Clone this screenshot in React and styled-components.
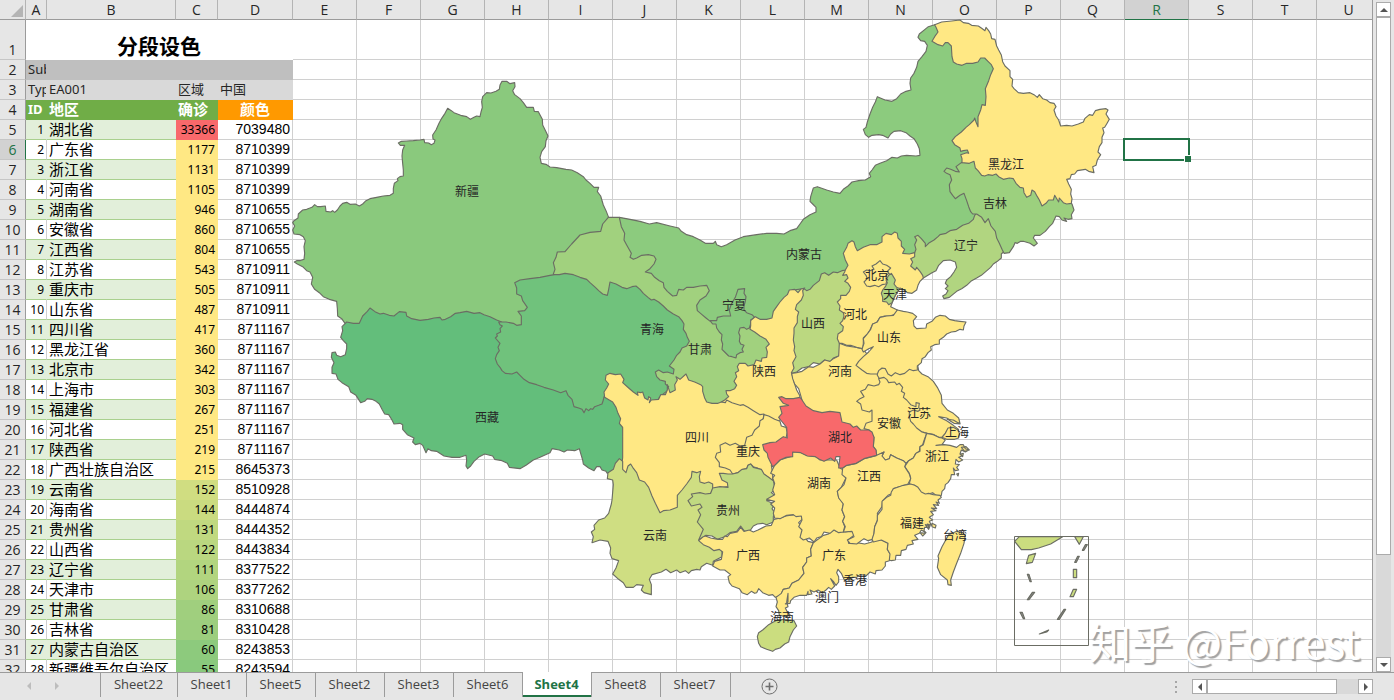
import React from "react";
import styled, { createGlobalStyle, css } from "styled-components";

const uiFont = `"Open Sans", "Noto Sans", "Noto Sans CJK SC", sans-serif`;
const cellFont = `"Noto Sans", "Noto Sans CJK SC", sans-serif`;

const GlobalStyle = createGlobalStyle`
  * {
    box-sizing: border-box;
  }
  body {
    margin: 0;
    background: #e6e6e6;
    font-family: ${uiFont};
  }
`;

const Workbook = styled.div`
  display: flex;
  flex-direction: column;
  height: 100vh;
  overflow: hidden;
`;

const Workspace = styled.main`
  display: flex;
  flex: 1;
  min-height: 0;
`;

const SheetView = styled.section`
  position: relative;
  flex: 1;
  min-width: 0;
  overflow: hidden;
  background: #fff;
  border-right: 1px solid #9b9b9b;
`;

const Grid = styled.table`
  table-layout: fixed;
  width: 1px;
  border-collapse: separate;
  border-spacing: 0;
`;

const Col = styled.col`
  width: ${(p) => p.$w}px;
`;

const headBase = css`
  padding: 0;
  background: ${(p) => (p.$active ? "#d2d2d2" : "#e6e6e6")};
  color: ${(p) => (p.$active ? "#217346" : "#262626")};
  font-size: 14px;
  font-weight: 400;
  line-height: 19px;
  text-align: center;
`;

const ColHead = styled.th`
  ${headBase}
  height: 20px;
  border-right: 1px solid #b4b4b4;
  border-bottom: 1px solid ${(p) => (p.$active ? "#217346" : "#9b9b9b")};
`;

const RowHead = styled.th`
  ${headBase}
  height: ${(p) => (p.$tall ? 40 : 20)}px;
  vertical-align: bottom;
  border-right: 1px solid ${(p) => (p.$active ? "#217346" : "#9b9b9b")};
  border-bottom: 1px solid #c6c6c6;
`;

const Corner = styled.th`
  padding: 0 2px 2px 0;
  height: 20px;
  background: #e6e6e6;
  border-right: 1px solid #b4b4b4;
  border-bottom: 1px solid #9b9b9b;
  text-align: right;
  vertical-align: bottom;

  svg {
    display: block;
    margin-left: auto;
  }
`;

const Cell = styled.td`
  height: 20px;
  padding: 0 2px;
  overflow: hidden;
  white-space: nowrap;
  color: #000;
  font-family: ${cellFont};
  font-size: 13px;
  line-height: 19px;
  border-right: 1px solid #d0d0d0;
  border-bottom: 1px solid #d0d0d0;
`;

const TitleCell = styled(Cell)`
  height: 40px;
  padding-bottom: 2px;
  font-size: 21px;
  font-weight: 700;
  line-height: 22px;
  text-align: center;
  vertical-align: bottom;
  border-color: #fff;
`;

const BandCell = styled(Cell)`
  background: ${(p) => p.$fill};
  border-color: ${(p) => p.$fill};
  color: #262626;
`;

const FieldCell = styled(Cell)`
  background: ${(p) => p.$fill};
  border-color: ${(p) => p.$fill};
  color: #fff;
  font-size: ${(p) => (p.$small ? 13 : 15)}px;
  font-weight: 700;
  text-align: ${(p) => (p.$center ? "center" : "left")};
`;

const IdCell = styled(Cell)`
  padding-top: 1px;
  background: ${(p) => (p.$band ? "#e2efda" : "#fff")};
  border-right-color: ${(p) => (p.$band ? "#e2efda" : "#d0d0d0")};
  border-bottom-color: #a9d08e;
  font-size: 12px;
  line-height: 18px;
  text-align: right;
`;

const NameCell = styled(Cell)`
  background: ${(p) => (p.$band ? "#e2efda" : "#fff")};
  border-right: 0;
  border-bottom-color: #a9d08e;
  font-size: 15px;
`;

const CountCell = styled(Cell)`
  padding-top: 1px;
  background: ${(p) => p.$fill};
  border-color: ${(p) => p.$fill};
  font-size: 12px;
  line-height: 18px;
  text-align: right;
`;

const ColorCell = styled(Cell)`
  font-family: "Liberation Sans", Arial, sans-serif;
  font-size: 14px;
  text-align: right;
`;

const SelectedCell = styled(Cell)`
  position: relative;
  overflow: visible;

  &::before {
    content: "";
    position: absolute;
    inset: -2px;
    border: 2px solid #217346;
  }

  &::after {
    content: "";
    position: absolute;
    right: -3px;
    bottom: -3px;
    width: 6px;
    height: 6px;
    background: #217346;
    border: 1px solid #fff;
    border-width: 1px 0 0 1px;
  }
`;

const MapShape = styled.svg`
  position: absolute;
  left: 290px;
  top: 18px;
  width: 830px;
  height: 650px;
  pointer-events: none;

  path {
    stroke: #6b6d64;
    stroke-width: 3.4;
    stroke-linejoin: round;
  }
  text {
    fill: #262626;
    font-family: "Noto Sans CJK SC", sans-serif;
    font-size: 12px;
    text-anchor: middle;
  }
`;

const Watermark = styled.div`
  position: absolute;
  right: 12px;
  bottom: 5px;
  color: #fff;
  font-family: "Noto Sans CJK SC", sans-serif;
  font-size: 42px;
  line-height: 52px;
  white-space: nowrap;
  text-shadow: 2px 2px 1px #a2a2a2;
`;

const VBar = styled.div`
  display: flex;
  flex-direction: column;
  width: 21px;
  padding: 2px 3px 0 3px;
`;

const Track = styled.div`
  display: flex;
  flex: 1;
  flex-direction: ${(p) => (p.$vertical ? "column" : "row")};
  background: #d9d9d9;
`;

const VThumb = styled.div`
  height: 84%;
  background: #fff;
  border: 1px solid #ababab;
`;

const HThumb = styled.div`
  width: 86%;
  background: #fff;
  border: 1px solid #ababab;
`;

const ScrollButton = styled.button`
  display: flex;
  align-items: center;
  justify-content: center;
  flex: none;
  width: 15px;
  height: 15px;
  padding: 0;
  background: #fff;
  border: 1px solid #ababab;
`;

const TabBar = styled.footer`
  display: flex;
  height: 28px;
  background: #e6e6e6;
  border-top: 1px solid #9b9b9b;
`;

const TabNav = styled.div`
  display: flex;
  align-items: center;
  width: 101px;
  height: 25px;
  padding-left: 25px;
  gap: 20px;
`;

const NavButton = styled.button`
  display: flex;
  width: 8px;
  padding: 0;
  background: none;
  border: 0;
`;

const TabList = styled.nav`
  display: flex;
  align-items: flex-start;
  margin-top: -1px;
`;

const Tab = styled.button`
  width: ${(p) => (p.$wide ? 77 : 69)}px;
  height: 25px;
  padding: 0 2px 0 0;
  background: ${(p) => (p.$active ? "#fff" : "transparent")};
  border: 0;
  border-bottom: 2px solid ${(p) => (p.$active ? "#217346" : "transparent")};
  color: ${(p) => (p.$active ? "#217346" : "#444")};
  font-family: ${uiFont};
  font-size: 13px;
  font-weight: ${(p) => (p.$active ? 700 : 400)};
  line-height: 25px;
  box-shadow: -1px 0 0 #9b9b9b, 1px 0 0 ${(p) => (p.$last ? "#9b9b9b" : "transparent")};
`;

const AddButton = styled.button`
  display: flex;
  align-items: center;
  height: 27px;
  margin-left: 31px;
  padding: 0;
  background: none;
  border: 0;
`;

const HBar = styled.div`
  display: flex;
  align-items: center;
  gap: 15px;
  width: 198px;
  margin-left: auto;
  margin-right: 21px;
`;

const HScroll = styled.div`
  display: flex;
  flex: 1;
  height: 15px;
`;

const YELLOW = "#ffe884";

const rows = [
  ["湖北省", 33366, 7039480, "#f8696b"],
  ["广东省", 1177, 8710399, YELLOW],
  ["浙江省", 1131, 8710399, YELLOW],
  ["河南省", 1105, 8710399, YELLOW],
  ["湖南省", 946, 8710655, YELLOW],
  ["安徽省", 860, 8710655, YELLOW],
  ["江西省", 804, 8710655, YELLOW],
  ["江苏省", 543, 8710911, YELLOW],
  ["重庆市", 505, 8710911, YELLOW],
  ["山东省", 487, 8710911, YELLOW],
  ["四川省", 417, 8711167, YELLOW],
  ["黑龙江省", 360, 8711167, YELLOW],
  ["北京市", 342, 8711167, YELLOW],
  ["上海市", 303, 8711167, YELLOW],
  ["福建省", 267, 8711167, YELLOW],
  ["河北省", 251, 8711167, YELLOW],
  ["陕西省", 219, 8711167, YELLOW],
  ["广西壮族自治区", 215, 8645373, "#fde983"],
  ["云南省", 152, 8510928, "#d0dd81"],
  ["海南省", 144, 8444874, "#cadb80"],
  ["贵州省", 131, 8444352, "#c0d980"],
  ["山西省", 122, 8443834, "#bad780"],
  ["辽宁省", 111, 8377522, "#b2d57f"],
  ["天津市", 106, 8377262, "#aed37f"],
  ["甘肃省", 86, 8310688, "#a0cf7e"],
  ["吉林省", 81, 8310428, "#9cce7e"],
  ["内蒙古自治区", 60, 8243853, "#8dca7d"],
  ["新疆维吾尔自治区", 55, 8243594, "#89c97d"],
];

const wideCols = "EFGHIJKLMNOPQRSTU".split("");
const colWidths = [26, 21, 129, 42, 75, ...wideCols.map(() => 64)];

// Outlines are in thirds of a pixel, measured from each region's own origin.
// Later regions cover the hidden edges of earlier ones.
const regions = [
  { name: "内蒙古", at: [800, 10], fill: "#8ccb7e", d: "M404 44L385 50 375 58 358 72 354 82 362 92 374 94 382 106 378 124 366 140 354 154 350 172 342 190 332 204 330 220 333 240 318 244 302 252 290 266 276 274 255 270 232 260 226 276 218 292 210 312 202 336 198 352 190 358 196 374 206 382 216 376 236 374 248 376 264 384 272 372 282 364 302 362 318 368 330 378 342 386 352 402 358 416 360 436 348 438 320 436 304 438 292 444 276 442 260 452 240 460 226 466 216 480 208 490 212 500 196 510 176 512 156 516 144 528 130 538 120 550 100 546 80 540 52 530 40 534 32 560 30 574 38 582 48 592 48 606 30 614 10 628 0 642 -10 656 -30 662 -48 672 -70 670 -100 670 -130 674 -170 680 -195 690 -220 704 -236 710 -250 704 -254 694 -260 700 -284 700 -300 690 -320 680 -340 674 -356 664 -364 654 -390 648 -430 638 -452 642 -480 634 -510 628 -542 622 -550 690 -500 790 -430 860 -330 870 -320 930 -240 970 -60 970 40 930 180 760 280 730 330 780 390 750 500 680 560 600 500 500 520 440 560 350 600 200 560 110 440 60Z" },
  { name: "新疆", at: [290, 70], fill: "#8ac97d", d: "M955 440L948 422 940 405 932 378 922 365 926 352 912 352 900 340 888 330 880 320 862 308 845 300 828 298 800 293 780 291 768 283 754 280 750 262 755 245 766 230 768 212 774 198 768 185 758 165 757 148 745 125 733 124 730 112 710 112 700 98 690 86 674 74 668 62 675 50 674 38 660 41 650 34 636 34 630 45 628 58 618 64 603 69 590 68 578 80 575 95 577 112 573 126 570 140 560 138 552 142 541 148 530 140 512 136 492 128 484 122 473 115 465 130 455 145 447 160 438 180 428 195 429 207 435 210 432 220 424 224 416 219 404 218 402 208 390 210 370 212 350 213 334 214 325 219 331 226 344 226 338 240 336 258 338 280 340 300 340 318 330 320 322 326 324 332 313 340 310 355 310 370 300 376 280 378 260 382 240 386 228 392 218 402 208 408 196 402 180 403 170 397 158 400 150 408 142 420 134 427 128 422 122 426 108 424 106 408 92 410 82 410 74 404 66 412 50 418 38 420 25 432 24 444 12 452 8 458 14 468 8 480 12 492 30 494 40 500 46 512 42 530 44 550 42 568 30 572 20 572 13 576 22 582 38 590 50 602 60 606 68 622 64 642 74 658 88 668 100 680 118 688 140 694 142 715 143 738 155 746 165 760 200 800 600 800 700 770 800 640 960 460Z" },
  { name: "甘肃", at: [580, 200], fill: "#a1d17e", d: "M-80 222L-75 208 -80 188 -72 172 -68 156 -45 155 -25 132 0 105 30 97 62 94 68 72 85 52 118 52 124 80 134 100 132 120 140 135 154 160 150 172 160 178 170 174 185 166 205 164 222 168 228 178 222 192 210 206 196 216 214 220 224 232 238 242 250 248 252 262 262 274 278 288 290 286 296 268 310 270 320 262 340 262 360 258 380 256 388 272 378 288 360 300 350 316 352 332 366 344 378 354 388 362 400 366 470 380 490 382 530 370 580 420 580 480 500 520 480 600 420 640 300 640 240 620 200 500 100 400 -60 260Z" },
  { name: "西藏", at: [320, 260], fill: "#63be7b", d: "M76 190L66 200 68 212 62 232 70 242 80 252 80 265 76 284 62 290 50 286 46 276 36 278 34 292 42 308 36 322 36 340 48 342 54 358 66 368 86 380 92 396 108 406 122 428 134 424 142 416 156 418 168 424 178 432 186 448 194 462 206 464 216 480 222 492 240 490 248 494 248 508 262 524 282 534 278 546 286 554 300 550 308 556 318 578 324 566 334 572 350 574 372 588 396 592 420 592 438 586 440 600 438 618 443 626 452 618 462 604 478 590 494 582 518 588 524 598 546 602 562 610 568 622 600 626 618 616 640 600 660 592 690 578 696 566 718 570 732 576 742 570 764 572 778 566 782 580 788 600 790 612 806 624 822 632 830 620 840 620 846 630 858 634 862 640 930 620 930 420 860 400 700 350 560 300 545 186 530 180 510 170 492 164 480 158 462 160 440 154 420 158 406 160 392 170 376 178 366 180 360 172 342 174 325 178 300 181 275 176 260 168 258 157 238 155 222 168 208 166 190 160 180 162 165 155 150 144 142 154 128 168 118 190 100 190 80 186Z" },
  { name: "青海", at: [320, 260], fill: "#70c27c", d: "M704 44L690 46 660 52 630 56 600 60 584 68 590 84 590 102 604 108 608 122 622 142 614 152 594 154 604 168 604 194 590 196 580 190 558 186 536 186 540 194 547 198 540 206 542 216 530 222 532 228 526 234 540 250 534 262 538 272 530 284 526 296 532 312 540 322 546 332 556 340 576 342 590 336 600 346 612 358 628 368 650 374 672 382 700 390 722 398 738 392 744 406 756 418 762 440 776 444 786 448 792 458 798 446 806 452 812 446 818 448 824 440 836 436 846 432 850 420 852 410 900 430 1000 440 1020 410 1042 392 1046 380 1036 372 1036 364 1020 360 1010 350 1006 336 1016 330 1030 338 1042 336 1060 342 1062 328 1048 318 1062 300 1070 286 1080 276 1086 264 1100 258 1108 244 1102 232 1098 220 1090 208 1092 192 1086 182 1076 170 1060 162 1042 150 1030 138 1016 126 1002 118 994 120 984 112 970 100 960 88 948 78 936 80 920 86 906 82 888 72 870 66 866 88 862 106 848 102 836 92 826 82 810 68 800 58 780 52 760 44 735 40 718 44Z" },
  { name: "宁夏", at: [580, 200], fill: "#88c97d", d: "M390 362L410 362 412 352 430 348 452 348 448 330 454 312 466 292 474 268 494 266 492 280 498 290 496 304 492 318 492 330 500 338 516 344 524 352 512 360 512 372 508 384 500 388 492 382 480 384 476 398 480 408 478 424 482 432 492 436 486 448 490 456 480 458 470 464 468 474 456 470 446 468 434 456 426 448 428 432 424 420 426 404 418 396 410 384 408 372 398 372Z" },
  { name: "山西", at: [780, 210], fill: "#bbd880", d: "M72 236L80 242 90 238 100 226 118 212 124 192 134 188 146 196 160 186 172 188 186 182 200 180 240 200 220 300 190 420 176 438 160 444 150 456 134 450 120 462 100 458 86 470 66 474 50 486 36 490 20 490 20 300 40 240Z" },
  { name: "陕西", at: [580, 200], fill: YELLOW, d: "M674 264L662 268 654 278 644 268 628 270 622 284 612 292 600 306 590 320 580 334 576 354 560 358 540 358 526 350 512 362 512 378 510 388 524 396 540 408 558 418 568 432 558 442 562 456 560 472 546 474 544 484 528 480 522 494 504 498 496 490 478 490 472 500 476 512 466 518 470 530 462 544 470 556 464 566 450 572 438 572 440 582 446 590 434 600 424 606 480 660 560 680 640 640 660 588 650 570 644 552 640 536 634 518 642 504 638 488 648 470 642 452 644 440 640 420 642 400 642 384 652 368 652 350 656 336 646 328 650 314 664 300 670 286 668 272Z" },
  { name: "河南", at: [740, 350], fill: YELLOW, d: "M155 70L170 68 186 64 206 50 220 52 240 42 254 30 270 34 280 26 296 18 298 -20 320 -12 350 -8 368 -4 420 60 430 90 430 200 400 230 380 250 200 200 182 136 176 116 164 102 158 86Z" },
  { name: "辽宁", at: [780, 210], fill: "#b1d580", d: "M404 128L408 118 404 104 410 90 404 80 414 76 424 86 436 100 436 110 448 98 462 90 474 80 480 74 498 70 510 62 530 58 548 46 566 40 580 28 584 16 600 0 680 60 680 100 672 124 664 132 664 144 652 154 640 162 632 172 618 184 604 196 590 204 575 212 560 226 545 236 530 244 518 254 508 262 492 266 488 258 498 252 504 242 496 236 504 228 496 220 500 210 512 200 522 186 530 172 526 156 510 150 490 152 476 166 468 182 456 188 440 198 430 204 400 190 380 150Z" },
  { name: "吉林", at: [800, 10], fill: "#9cd07e", d: "M484 458L476 464 468 470 478 486 466 484 452 478 440 474 432 484 440 490 450 494 455 510 448 524 450 545 458 556 466 566 480 556 492 550 500 572 506 590 512 605 518 612 530 612 545 622 555 638 565 626 573 648 586 664 590 684 598 700 606 718 612 730 628 728 640 710 645 698 652 700 662 694 670 694 690 700 702 708 712 700 700 684 704 676 720 676 736 664 748 650 758 640 768 618 778 620 786 630 800 634 792 624 804 628 816 626 814 614 822 600 816 582 760 540 640 480 540 450Z" },
  { name: "黑龙江", at: [800, 10], fill: YELLOW, d: "M404 44L425 36 455 33 480 30 490 38 505 40 515 46 535 48 545 55 555 62 558 52 566 62 572 72 575 86 585 88 590 108 596 120 604 135 608 155 615 168 630 182 630 200 638 208 636 228 642 236 655 248 670 250 690 248 702 254 712 262 718 254 728 266 740 270 750 278 762 280 768 290 762 300 768 318 776 330 782 348 800 346 816 348 835 342 850 336 855 325 868 314 878 316 886 302 900 298 918 296 924 300 918 312 928 328 920 342 914 352 908 354 912 368 906 382 906 398 898 410 894 426 902 434 892 450 888 466 878 470 882 488 866 484 856 478 832 482 824 492 814 494 810 506 800 508 806 522 814 538 812 552 816 566 814 580 800 582 790 578 778 564 776 576 764 556 760 570 746 570 738 580 726 588 718 570 712 560 704 545 696 540 692 556 680 562 672 548 670 534 660 532 648 520 640 506 628 504 610 508 596 500 588 492 578 496 564 494 554 498 545 496 534 482 526 474 522 454 508 460 486 458 486 446 482 434 500 428 506 430 502 420 490 422 482 424 480 414 464 404 456 392 466 380 484 366 498 352 508 344 522 330 524 324 528 336 534 350 534 320 542 300 546 284 556 286 558 260 556 236 566 212 572 194 580 176 574 164 564 154 554 144 542 144 534 156 518 160 500 160 486 166 470 162 460 156 456 140 454 108 444 98 436 98 428 108 414 104 396 94 404 80 414 66 408 52Z" },
  { name: "河北", at: [780, 210], fill: YELLOW, d: "M196 180L204 166 196 150 190 130 200 112 204 100 216 92 222 96 226 110 232 122 250 112 270 104 290 104 306 96 306 80 318 70 334 74 344 66 352 70 354 84 364 94 364 108 374 118 368 130 388 132 404 128 404 140 392 146 398 156 392 168 406 180 410 172 420 184 428 196 430 204 420 214 414 226 410 240 396 250 382 248 372 240 360 234 346 256 340 270 336 280 332 290 352 300 346 312 330 318 314 318 300 322 290 338 278 342 270 360 262 372 250 384 250 400 248 416 230 412 212 406 200 406 186 400 178 400 172 386 174 372 188 362 190 350 180 340 188 332 192 318 190 308 178 300 180 288 172 276 182 266 182 256 198 256 208 244 212 232 204 220 194 214 204 204 200 194 188 196 194 186Z" },
  { name: "北京", at: [780, 210], fill: YELLOW, d: "M282 178L276 168 288 162 300 152 308 162 320 166 332 174 322 184 330 194 326 204 320 212 318 222 306 224 296 230 284 226 270 230 260 228 252 216 262 206 258 196 250 186 260 180 270 182ZM318 196L326 190 334 198 330 206 320 206Z" },
  { name: "天津", at: [780, 210], fill: "#aed37f", d: "M326 196L334 190 340 200 346 210 342 222 350 232 360 236 352 246 346 256 340 268 336 278 326 284 320 276 308 274 308 262 304 250 308 240 316 230 322 218 318 210Z" },
  { name: "江苏", at: [740, 350], fill: YELLOW, d: "M532 40L536 62 546 72 564 80 580 94 592 112 604 136 606 160 622 180 640 190 656 204 660 220 640 216 620 204 596 200 620 212 640 226 656 238 644 240 624 238 616 250 606 262 596 262 582 254 562 250 548 246 500 246 460 200 424 96 412 76 412 60 440 50Z" },
  { name: "山东", at: [780, 210], fill: YELLOW, d: "M352 300L370 304 382 306 398 310 410 320 400 332 402 348 410 356 438 354 440 342 456 334 466 322 480 316 496 318 508 328 524 332 540 334 558 336 552 348 550 360 540 358 528 364 514 366 500 372 490 382 478 390 478 402 464 404 452 410 454 420 444 428 436 440 426 446 424 458 412 468 412 480 400 482 388 478 374 490 360 494 346 488 334 498 324 492 316 476 306 474 296 482 292 492 272 492 260 490 246 480 228 466 236 454 250 440 266 426 280 410 266 416 250 426 246 418 252 400 250 386 262 372 272 358 278 342 292 336 300 322 320 318 340 316Z" },
  { name: "安徽", at: [740, 350], fill: YELLOW, d: "M420 96L416 86 432 82 440 88 446 98 464 96 470 104 478 100 488 112 484 124 494 130 490 142 500 150 512 164 528 170 528 158 538 160 536 172 540 180 534 184 520 180 508 186 508 200 512 214 520 222 530 234 546 246 560 250 554 266 548 284 540 290 538 304 526 312 520 324 506 332 498 340 490 332 470 324 452 314 448 326 436 330 426 318 432 306 410 318 408 300 400 290 402 262 388 240 372 236 378 220 396 214 396 180 388 186 366 180 362 162 350 154 360 146 372 140 362 124 376 118 384 104 402 108 416 104Z" },
  { name: "浙江", at: [740, 350], fill: YELLOW, d: "M560 250L580 254 596 262 606 264 616 270 606 284 588 286 612 284 630 286 650 292 660 284 670 284 676 296 686 300 676 306 664 300 660 312 666 318 656 322 668 330 656 336 648 328 646 342 658 344 650 352 656 360 646 362 640 354 644 374 634 374 632 386 624 398 616 404 614 416 606 424 604 436 590 438 578 428 566 432 560 440 548 430 536 432 532 412 524 406 508 402 512 384 508 370 494 350 506 332 520 324 528 310 540 304 540 290 550 284ZM664 292L678 290 688 300 674 304ZM662 312L670 310 668 320ZM650 372L656 370 654 378Z" },
  { name: "上海", at: [740, 350], fill: YELLOW, d: "M616 250L624 234 640 232 654 240 658 250 656 264 644 268 620 268 606 262ZM622 208L640 210 660 222 642 220Z" },
  { name: "四川", at: [580, 370], fill: YELLOW, d: "M74 82L72 66 80 54 86 42 76 30 78 16 90 10 106 14 122 12 132 28 128 38 146 54 160 66 174 76 172 66 182 68 188 66 194 84 204 90 206 80 212 84 208 98 214 90 236 88 242 74 256 74 262 60 262 44 270 68 286 60 284 44 292 30 288 20 300 28 318 12 326 30 344 36 362 44 368 50 368 64 374 84 380 96 396 100 414 100 424 96 436 98 440 90 456 98 480 106 490 104 504 112 520 122 540 134 552 132 550 144 540 200 480 300 444 350 380 360 320 420 250 440 160 360 124 300 128 262 128 172 118 160 122 146 114 130 108 112 98 96 84 88Z" },
  { name: "重庆", at: [580, 370], fill: YELLOW, d: "M552 134L566 138 584 148 600 154 604 168 618 172 622 186 618 204 602 206 592 240 574 286 578 310 578 334 562 320 550 312 544 300 532 294 520 290 512 282 504 286 500 296 484 300 474 308 458 312 450 300 436 294 418 290 418 278 406 262 410 250 422 246 420 226 436 218 450 226 466 220 480 228 494 226 500 202 516 196 524 180 538 168 540 152 550 146Z" },
  { name: "云南", at: [580, 370], fill: "#cfde82", d: "M84 308L100 298 106 280 118 266 128 274 128 298 138 308 144 288 152 282 158 292 170 308 178 330 194 336 206 352 216 378 226 400 240 428 250 422 270 420 292 412 292 376 306 360 320 342 334 322 336 304 350 308 362 304 358 320 360 336 374 340 386 336 398 342 398 358 392 370 370 400 380 480 380 510 426 540 426 560 400 574 398 586 380 580 364 590 360 600 350 598 334 602 326 610 316 602 300 608 290 600 272 608 258 598 244 606 216 614 208 628 214 644 214 674 192 668 184 660 190 646 170 644 160 652 138 652 130 638 116 628 98 612 108 594 116 572 96 566 90 550 92 534 84 514 60 510 36 518 40 500 34 486 44 478 42 466 56 450 74 444 86 430 94 402 96 390 100 344 98 330 82 326Z" },
  { name: "贵州", at: [580, 370], fill: "#c0d981", d: "M418 310L430 310 444 312 458 312 474 308 486 298 500 296 504 286 512 282 520 292 544 298 552 312 566 322 580 332 584 350 582 362 574 368 584 376 580 390 560 392 584 402 576 416 584 428 580 440 580 456 560 464 548 460 532 462 520 468 506 488 492 482 482 468 470 484 450 488 434 500 412 508 396 498 378 496 362 506 356 510 370 478 352 456 362 434 354 420 366 412 360 402 334 408 324 392 338 380 334 372 360 368 376 372 392 370 398 354 420 350 444 352 442 338 426 330Z" },
  { name: "广西", at: [690, 480], fill: YELLOW, d: "M26 182L40 170 46 168 62 174 84 178 98 178 104 168 112 170 120 160 142 156 152 142 162 154 178 150 190 156 204 150 228 138 244 136 252 118 270 114 288 108 312 104 334 104 336 118 326 128 340 150 332 170 344 172 354 184 370 188 362 208 364 228 350 234 350 246 338 262 342 280 326 300 306 310 298 324 280 328 272 346 256 352 248 344 236 346 218 338 206 326 200 338 194 340 184 334 172 344 156 338 148 326 126 318 118 308 114 290 122 284 104 270 90 270 68 258 74 244 94 238 98 216 88 208 72 212 58 202 40 194Z" },
  { name: "广东", at: [690, 480], fill: YELLOW, d: "M370 188L384 178 400 166 416 162 426 146 440 154 466 156 490 152 494 164 474 180 476 190 500 188 524 192 546 186 548 178 574 180 594 190 592 208 602 224 598 242 586 246 586 258 576 270 558 272 556 282 540 276 530 286 510 284 500 292 486 292 484 300 462 298 454 280 444 268 440 278 446 290 446 306 438 316 430 304 422 296 434 318 424 328 416 322 408 330 398 338 384 330 372 336 360 330 366 342 354 344 354 334 350 346 330 346 312 352 302 362 300 370 286 372 294 366 294 340 290 366 294 380 286 384 292 396 300 404 290 410 268 406 266 392 258 380 262 366 258 352 274 340 280 328 298 324 306 310 326 300 342 280 338 262 350 246 350 234 364 228 362 208Z" },
  { name: "湖南", at: [740, 350], fill: YELLOW, d: "M104 346L120 330 150 320 158 306 180 306 200 316 230 320 240 330 290 330 300 354 314 362 318 384 304 412 292 424 296 442 310 460 306 480 314 500 308 514 314 530 310 546 296 548 282 540 270 550 252 546 244 560 230 564 222 576 208 564 190 570 180 562 186 540 176 530 186 510 184 498 168 500 160 494 140 496 120 506 104 504 100 490 104 474 92 462 104 454 80 448 104 434 98 420 104 400 98 384 104 376 92 370Z" },
  { name: "江西", at: [740, 350], fill: YELLOW, d: "M308 354L320 346 350 340 372 326 388 322 410 316 432 306 426 318 436 330 448 326 452 314 470 324 490 332 498 340 494 350 508 372 512 386 504 402 480 410 460 416 458 430 444 436 428 452 426 470 412 490 414 506 404 530 402 550 398 568 384 572 372 566 350 582 330 580 322 570 342 560 336 544 310 546 316 530 308 514 314 500 306 480 310 462 296 444 292 424 304 412 312 404 318 384 306 374Z" },
  { name: "湖北", at: [740, 350], fill: "#f8696b", d: "M116 142L126 140 138 146 160 146 180 142 186 150 198 168 220 182 246 188 270 184 300 188 306 216 330 222 340 232 350 228 362 240 386 240 396 246 402 262 400 290 408 300 410 316 386 322 372 326 348 340 320 346 308 354 296 354 300 320 288 320 284 334 272 324 252 334 238 328 226 320 202 318 182 308 158 306 158 320 138 322 120 330 104 346 98 350 84 322 82 310 72 300 68 284 90 278 108 276 130 260 142 264 140 232 122 210 116 202 126 190 120 170 146 166 130 160Z" },
  { name: "福建", at: [690, 480], fill: YELLOW, d: "M604 36L610 26 640 16 662 12 674 16 684 22 694 36 706 42 716 40 730 44 750 46 754 52 744 60 748 70 738 66 746 76 730 74 740 86 724 84 738 92 722 94 730 104 718 112 728 120 718 124 724 136 712 132 716 142 704 142 702 152 708 158 694 150 688 160 674 166 684 178 666 182 670 192 652 196 648 208 634 212 632 226 618 226 616 240 604 242 598 240 600 222 592 208 594 190 574 180 550 186 546 178 552 160 554 140 562 122 562 106 576 88 576 64 590 52 602 46ZM726 130L738 136 736 144 726 140ZM706 134L720 138 716 148ZM690 158L706 160 698 168Z" },
  { name: "海南", at: [690, 480], fill: "#cbdd7f", d: "M236 434L246 428 262 420 282 418 298 420 312 422 320 438 310 450 300 470 296 486 284 492 270 504 256 508 248 514 230 508 212 500 206 490 202 470 206 458 218 450Z" },
  { name: "台湾", at: [690, 480], fill: YELLOW, d: "M800 154L818 158 826 166 822 190 812 220 800 250 790 276 782 300 784 316 774 314 772 300 752 284 742 262 746 236 744 228 756 200 766 182 776 164Z" },
  { name: "南海诸岛", at: [980, 500], fill: "#cbdd7f", d: "M104 124L118 110 248 110 212 132 176 144 154 149 124 149ZM284 110L310 110 298 133ZM146 166L167 160 157 187 139 191ZM280 208H290V233H280ZM280 268H290L280 290H270Z" },
  { name: "断续线", at: [980, 500], fill: "#8f8f8f", d: "M322 134L312 151 307 151 316 134ZM298 169L289 187 284 187 293 169ZM142 223L147 223 154 245 150 245ZM164 277L147 299 142 299 157 277ZM120 337L127 337 134 356 130 356ZM252 328L257 328 238 358 232 358ZM178 402L206 390 200 396Z" },
];

const labels = [
  ["新疆", 467, 196],
  ["西藏", 487, 422],
  ["青海", 652, 334],
  ["甘肃", 700, 354],
  ["宁夏", 734, 310],
  ["内蒙古", 804, 259],
  ["黑龙江", 1006, 169],
  ["吉林", 995, 208],
  ["辽宁", 966, 250],
  ["北京", 877, 280],
  ["天津", 895, 299],
  ["河北", 855, 319],
  ["山东", 889, 342],
  ["山西", 813, 328],
  ["陕西", 764, 376],
  ["河南", 840, 376],
  ["四川", 697, 442],
  ["重庆", 748, 456],
  ["湖北", 840, 442],
  ["安徽", 889, 428],
  ["江苏", 919, 418],
  ["上海", 957, 437],
  ["浙江", 937, 461],
  ["湖南", 819, 488],
  ["江西", 869, 481],
  ["贵州", 728, 515],
  ["云南", 655, 540],
  ["广西", 748, 560],
  ["广东", 834, 560],
  ["福建", 912, 528],
  ["台湾", 955, 540],
  ["香港", 855, 585],
  ["澳门", 827, 602],
  ["海南", 782, 622],
];

function ChinaMap() {
  return (
    <MapShape viewBox="290 18 830 650" role="img" aria-label="中国">
      {regions.map((r) => (
        <g
          key={r.name}
          transform={`translate(${r.at[0]} ${r.at[1]}) scale(0.33333)`}
        >
          <path d={r.d} fill={r.fill} />
        </g>
      ))}
      <path
        d="M1014.5 536.5h74v109h-74z"
        fill="none"
        style={{ strokeWidth: 1 }}
      />
      {labels.map(([name, x, y]) => (
        <text key={name} x={x} y={y}>
          {name}
        </text>
      ))}
    </MapShape>
  );
}

function Arrow({ dir, color = "#555" }) {
  const shapes = {
    up: "M0 6L4 2 8 6Z",
    down: "M0 2L4 6 8 2Z",
    left: "M6 0L2 4 6 8Z",
    right: "M2 0L6 4 2 8Z",
  };
  return (
    <svg width="8" height="8" viewBox="0 0 8 8">
      <path d={shapes[dir]} fill={color} />
    </svg>
  );
}

function EmptyCells({ row }) {
  return wideCols.map((c) =>
    row === 6 && c === "R" ? <SelectedCell key={c} /> : <Cell key={c} />
  );
}

function SheetGrid() {
  return (
    <Grid>
      <colgroup>
        {colWidths.map((w, i) => (
          <Col key={i} $w={w} />
        ))}
      </colgroup>
      <thead>
        <tr>
          <Corner>
            <svg width="12" height="12" viewBox="0 0 12 12">
              <path d="M12 0V12H0Z" fill="#b4b4b4" />
            </svg>
          </Corner>
          {["A", "B", "C", "D", ...wideCols].map((c) => (
            <ColHead key={c} scope="col" $active={c === "R"}>
              {c}
            </ColHead>
          ))}
        </tr>
      </thead>
      <tbody>
        <tr>
          <RowHead scope="row" $tall>1</RowHead>
          <TitleCell colSpan={4}>分段设色</TitleCell>
          <EmptyCells row={1} />
        </tr>
        <tr>
          <RowHead scope="row">2</RowHead>
          <BandCell $fill="#bfbfbf">Sub</BandCell>
          <BandCell $fill="#bfbfbf" colSpan={3} />
          <EmptyCells row={2} />
        </tr>
        <tr>
          <RowHead scope="row">3</RowHead>
          <BandCell $fill="#d9d9d9">Type</BandCell>
          <BandCell $fill="#d9d9d9">EA001</BandCell>
          <BandCell $fill="#d9d9d9">区域</BandCell>
          <BandCell $fill="#d9d9d9">中国</BandCell>
          <EmptyCells row={3} />
        </tr>
        <tr>
          <RowHead scope="row">4</RowHead>
          <FieldCell $fill="#70ad47" $small>ID</FieldCell>
          <FieldCell $fill="#70ad47">地区</FieldCell>
          <FieldCell $fill="#70ad47">确诊</FieldCell>
          <FieldCell $fill="#ff9900" $center>颜色</FieldCell>
          <EmptyCells row={4} />
        </tr>
        {rows.map(([name, count, color, fill], i) => (
          <tr key={name}>
            <RowHead scope="row" $active={i === 1}>{i + 5}</RowHead>
            <IdCell $band={i % 2 === 0}>{i + 1}</IdCell>
            <NameCell $band={i % 2 === 0}>{name}</NameCell>
            <CountCell $fill={fill}>{count}</CountCell>
            <ColorCell>{color}</ColorCell>
            <EmptyCells row={i + 5} />
          </tr>
        ))}
      </tbody>
    </Grid>
  );
}

const tabs = ["Sheet22", "Sheet1", "Sheet5", "Sheet2", "Sheet3", "Sheet6", "Sheet4", "Sheet8", "Sheet7"];

export default function App() {
  return (
    <Workbook>
      <GlobalStyle />
      <Workspace>
        <SheetView>
          <SheetGrid />
          <ChinaMap />
          <Watermark>知乎 @Forrest</Watermark>
        </SheetView>
        <VBar>
          <ScrollButton aria-label="Scroll up">
            <Arrow dir="up" />
          </ScrollButton>
          <Track $vertical>
            <VThumb />
          </Track>
          <ScrollButton aria-label="Scroll down">
            <Arrow dir="down" />
          </ScrollButton>
        </VBar>
      </Workspace>
      <TabBar>
        <TabNav>
          <NavButton aria-label="Previous sheet">
            <Arrow dir="left" color="#bdbdbd" />
          </NavButton>
          <NavButton aria-label="Next sheet">
            <Arrow dir="right" color="#bdbdbd" />
          </NavButton>
        </TabNav>
        <TabList>
          {tabs.map((t, i) => (
            <Tab
              key={t}
              $wide={i === 0}
              $active={t === "Sheet4"}
              $last={i === tabs.length - 1}
            >
              {t}
            </Tab>
          ))}
        </TabList>
        <AddButton aria-label="New sheet">
          <svg width="17" height="17" viewBox="0 0 17 17">
            <circle cx="8.5" cy="8.5" r="7.5" fill="none" stroke="#6e6e6e" />
            <path d="M8.5 4.5v8M4.5 8.5h8" stroke="#6e6e6e" strokeWidth="1.6" />
          </svg>
        </AddButton>
        <HBar>
          <svg width="2" height="12" viewBox="0 0 2 12">
            <path d="M0 0h2v2h-2zM0 5h2v2h-2zM0 10h2v2h-2z" fill="#a6a6a6" />
          </svg>
          <HScroll>
            <ScrollButton aria-label="Scroll left">
              <Arrow dir="left" />
            </ScrollButton>
            <Track>
              <HThumb />
            </Track>
            <ScrollButton aria-label="Scroll right">
              <Arrow dir="right" />
            </ScrollButton>
          </HScroll>
        </HBar>
      </TabBar>
    </Workbook>
  );
}
